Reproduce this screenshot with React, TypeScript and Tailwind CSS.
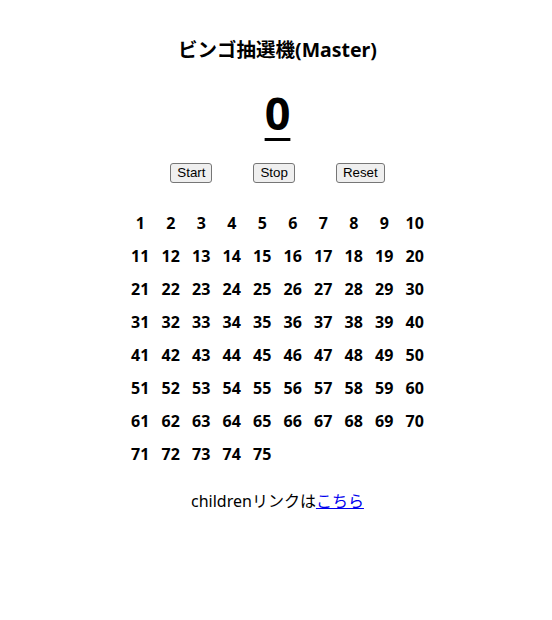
import React, { useRef, useState } from 'react';

const NUMBERS = Array.from({ length: 75 }, (_, i) => i + 1);

const BingoButton = ({ children, ...props }: React.ButtonHTMLAttributes<HTMLButtonElement>) => (
  <button
    className="h-[20px] px-[6px] bg-[#efefef] border border-[#767676] rounded-[3px] text-[13.33px] leading-none text-black font-['Liberation_Sans',Arial,sans-serif]"
    {...props}
  >
    {children}
  </button>
);

export default function App() {
  const [current, setCurrent] = useState(0);
  const timer = useRef<number | null>(null);

  const start = () => {
    if (timer.current !== null) return;
    timer.current = window.setInterval(() => {
      setCurrent(Math.floor(Math.random() * 75) + 1);
    }, 60);
  };

  const stop = () => {
    if (timer.current !== null) {
      window.clearInterval(timer.current);
      timer.current = null;
    }
  };

  const reset = () => {
    stop();
    setCurrent(0);
  };

  return (
    <div className="min-h-[620px] bg-white text-black font-['Noto_Sans','Noto_Sans_CJK_JP',sans-serif] flex flex-col items-center pt-[36px] pl-[3px]">
      <h1 className="text-[19.5px] leading-[28px] font-bold">ビンゴ抽選機(Master)</h1>

      <div className="mt-[23px] h-[52px] text-[45px] leading-[52px] font-bold underline decoration-[3px] underline-offset-[8px]">
        {current}
      </div>

      <div className="mt-[24px] flex gap-[41px]">
        <BingoButton onClick={start}>Start</BingoButton>
        <BingoButton onClick={stop}>Stop</BingoButton>
        <BingoButton onClick={reset}>Reset</BingoButton>
      </div>

      <div className="mt-[23px] grid grid-cols-10 w-[305px]">
        {NUMBERS.map(n => (
          <div key={n} className="h-[33px] flex items-center justify-center text-[16px] font-bold">
            {n}
          </div>
        ))}
      </div>

      <p className="mt-[19px] text-[16px] leading-[24px]">
        childrenリンクは<a href="#" className="text-[#0000ee] underline">こちら</a>
      </p>
    </div>
  );
}
